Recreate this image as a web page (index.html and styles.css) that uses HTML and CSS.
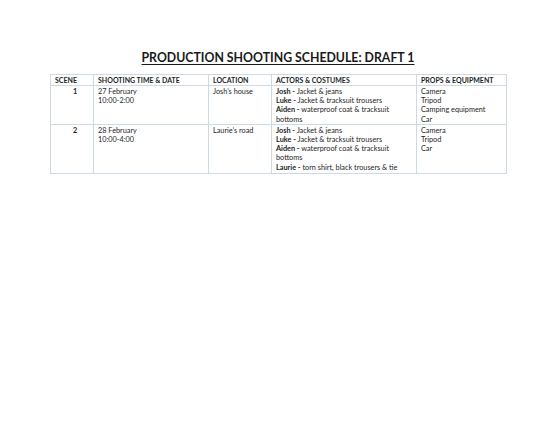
FILE: index.html
```html
<!DOCTYPE html>
<html>
<head>
<meta charset="utf-8">
<link rel="stylesheet" href="styles.css">
</head>
<body>
<div class="page">
  <h1 class="title">PRODUCTION SHOOTING SCHEDULE: DRAFT 1</h1>
  <table class="schedule">
    <colgroup>
      <col class="c-scene"><col class="c-time"><col class="c-loc"><col class="c-actors"><col class="c-props">
    </colgroup>
    <thead>
      <tr>
        <th>SCENE</th>
        <th>SHOOTING TIME &amp; DATE</th>
        <th>LOCATION</th>
        <th>ACTORS &amp; COSTUMES</th>
        <th>PROPS &amp; EQUIPMENT</th>
      </tr>
    </thead>
    <tbody>
      <tr class="r1">
        <td class="num">1</td>
        <td>27 February<br>10:00-2:00</td>
        <td>Josh’s house</td>
        <td><b>Josh -</b> Jacket &amp; jeans<br><b>Luke -</b> Jacket &amp; tracksuit trousers<br><b>Aiden -</b> waterproof coat &amp; tracksuit bottoms</td>
        <td>Camera<br>Tripod<br>Camping equipment<br>Car</td>
      </tr>
      <tr class="r2">
        <td class="num">2</td>
        <td>28 February<br>10:00-4:00</td>
        <td>Laurie’s road</td>
        <td><b>Josh -</b> Jacket &amp; jeans<br><b>Luke -</b> Jacket &amp; tracksuit trousers<br><b>Aiden -</b> waterproof coat &amp; tracksuit bottoms<br><b>Laurie -</b> torn shirt, black trousers &amp; tie</td>
        <td>Camera<br>Tripod<br>Car</td>
      </tr>
    </tbody>
  </table>
</div>
</body>
</html>
```
FILE: styles.css
```css
html, body {
  margin: 0;
  padding: 0;
  background: #ffffff;
}
.page {
  width: 560px;
  height: 433px;
  padding: 50px 0 0 50px;
  box-sizing: border-box;
  font-family: Lato, "Open Sans", sans-serif;
  color: #1e1e1e;
}
.title {
  margin: 0 0 8px 0;
  width: 456px;
  text-align: center;
  font-size: 12.3px;
  font-weight: 700;
  line-height: 16px;
  text-decoration: underline;
  text-underline-offset: 2px;
  text-decoration-thickness: 1px;
  color: #1a1a1a;
}
.schedule {
  border-collapse: collapse;
  table-layout: fixed;
  width: 456px;
  font-size: 7.3px;
  line-height: 9.2px;
}
.c-scene { width: 43px; }
.c-time { width: 115px; }
.c-loc { width: 63px; }
.c-actors { width: 145px; }
.c-props { width: 90px; }
.schedule th, .schedule td {
  border: 1px solid #cdd9e3;
  padding: 0 2px 0 4px;
  text-align: left;
  vertical-align: top;
  overflow: hidden;
}
.schedule td:nth-child(4) {
  padding-right: 9px;
}
.schedule th {
  font-weight: 700;
  font-size: 7px;
  height: 10px;
  line-height: 10px;
  vertical-align: middle;
}
.schedule td.num {
  text-align: center;
  font-weight: 700;
  padding-left: 8px;
}
.r1 td { height: 36px; padding-top: 1px; }
.r2 td { height: 47px; padding-top: 1px; }
b { font-weight: 700; }
```
